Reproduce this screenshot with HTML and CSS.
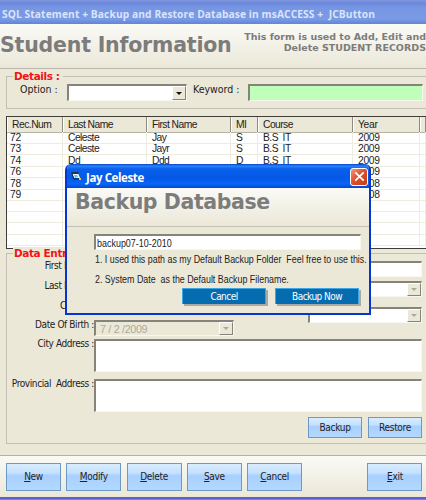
FILE: index.html
```html
<!DOCTYPE html>
<html lang="en">
<head>
<meta charset="utf-8">
<title>Student Information</title>
<link rel="stylesheet" href="styles.css">
</head>
<body>
<div class="window">
  <div class="titlebar"><span class="narrow">SQL Statement + Backup and Restore Database in msACCESS +&nbsp; JCButton</span></div>
  <header class="banner">
    <h1>Student Information</h1>
    <p>This form is used to Add, Edit and<br>Delete STUDENT RECORDS</p>
  </header>
  <main>
    <section class="group details">
      <h2>Details :</h2>
      <div class="search">
        <label class="option">Option :</label>
        <div class="field combo"><span class="drop"></span></div>
        <label class="keyword">Keyword :</label>
        <div class="field green"></div>
      </div>
    </section>
    <section class="list">
      <div class="row head"><span>Rec.Num</span><span>Last Name</span><span>First Name</span><span>MI</span><span>Course</span><span>Year</span><span></span></div>
      <div class="row"><span>72</span><span>Celeste</span><span>Jay</span><span>S</span><span>B.S&nbsp; IT</span><span>2009</span><span></span></div>
      <div class="row"><span>73</span><span>Celeste</span><span>Jayr</span><span>S</span><span>B.S&nbsp; IT</span><span>2009</span><span></span></div>
      <div class="row"><span>74</span><span>Dd</span><span>Ddd</span><span>D</span><span>B.S&nbsp; IT</span><span>2009</span><span></span></div>
      <div class="row"><span>76</span><span></span><span></span><span></span><span></span><span>2009</span><span></span></div>
      <div class="row"><span>78</span><span></span><span></span><span></span><span></span><span>2008</span><span></span></div>
      <div class="row"><span>79</span><span></span><span></span><span></span><span></span><span>2008</span><span></span></div>
      <div class="row"><span></span><span></span><span></span><span></span><span></span><span></span><span></span></div>
      <div class="row"><span></span><span></span><span></span><span></span><span></span><span></span><span></span></div>
      <div class="row"><span></span><span></span><span></span><span></span><span></span><span></span><span></span></div>
      <div class="row"><span></span><span></span><span></span><span></span><span></span><span></span><span></span></div>
    </section>
    <section class="group entry">
      <h2>Data Entry :</h2>
      <div class="form">
        <label>First Name :</label><div class="field wide"></div>
        <label>Last Name :</label><div class="field wide combo off"><span class="drop"></span></div>
        <label class="course">Course :</label><div class="field half combo off"><span class="drop"></span></div>
        <label>Date Of Birth :</label><div class="field date combo off"><span class="value">7 / 2 /2009</span><span class="drop"></span></div>
        <label>City Address :</label><div class="field area"></div>
        <label>Provincial&nbsp; Address :</label><div class="field area"></div>
      </div>
      <div class="actions"><button class="small">Backup</button><button class="small">Restore</button></div>
    </section>
  </main>
  <footer>
    <button><u>N</u>ew</button><button><u>M</u>odify</button><button><u>D</u>elete</button><button><u>S</u>ave</button><button><u>C</u>ancel</button><button class="exit"><u>E</u>xit</button>
  </footer>
  <div class="edge"></div>

  <div class="dialog">
    <div class="caption">
      <svg width="11" height="9" viewBox="0 0 11 9"><path d="M1 1h6l2 5H3z" fill="#f4f6f4"/><path d="M0 0h7l1 2H1z" fill="#143a50"/><path d="M1 2l2 5h5" fill="none" stroke="#123" stroke-width="1"/><path d="M3 3l3 0 1 2-3 1z" fill="#5ccbd0"/><path d="M8 6h2v2H8z" fill="#e8c84a"/></svg>
      <span>Jay Celeste</span>
      <div class="close"><svg width="11" height="11" viewBox="0 0 11 11"><path d="M1.3 1.3l8.4 8.4M9.7 1.3l-8.4 8.4" stroke="#fff" stroke-width="1.7"/></svg></div>
    </div>
    <div class="heading">Backup Database</div>
    <div class="content">
      <div class="field path"><span class="narrow">backup07-10-2010</span></div>
      <p class="note1"><span class="narrow">1. I used this path as my Default Backup Folder&nbsp; Feel free to use this.</span></p>
      <p class="note2"><span class="narrow">2. System Date&nbsp; as the Default Backup Filename.</span></p>
      <div class="choices"><button class="flat">Cancel</button><button class="flat">Backup Now</button></div>
    </div>
  </div>
</div>
</body>
</html>
```
FILE: styles.css
```css
* { box-sizing: border-box; }
body { margin: 0; overflow: hidden; }
.window {
  position: relative;
  width: 426px;
  height: 500px;
  overflow: hidden;
  display: flex;
  flex-direction: column;
  background: #ebe8d8;
  color: #222;
  font: 10.5px/12px "DejaVu Sans Condensed", "DejaVu Sans", sans-serif;
  white-space: nowrap;
}
h1, h2, p { margin: 0; }
.narrow { display: inline-block; transform: scaleX(.845); transform-origin: 0 50%; }
.titlebar {
  height: 24px;
  flex: none;
  padding: 1px 0 0 2px;
  background: linear-gradient(#8197dc 0, #6a88dc 3px, #7695e2 7px, #7a9be6 19px, #6484d4 24px);
  color: #dbe4fa;
  font: bold 11px/26px "Open Sans", sans-serif;
  letter-spacing: .1px;
}
.titlebar .narrow { transform: scaleX(.93); }
.banner {
  height: 45px;
  flex: none;
  display: flex;
  justify-content: space-between;
  background: linear-gradient(#fafaf6, #ebe8d8);
  border-bottom: 1px solid #bab8ae;
  color: #7c7c7c;
}
.banner h1 {
  font: bold 20.5px/42px "DejaVu Sans", sans-serif;
  letter-spacing: -.2px;
  width: 232px;
}
.banner p {
  padding-top: 7px;
  text-align: right;
  font: bold 9.5px/11px "DejaVu Sans", sans-serif;
}
main { height: 386px; flex: none; }
.group { margin-left: 6px; border: 1px solid #c2c0b4; border-right: 0; }
h2 {
  width: max-content;
  margin: -7px 0 0 6px;
  padding: 0 3px 0 1px;
  background: #ebe8d8;
  color: #f01418;
  font: bold 10.5px/13px "DejaVu Sans", sans-serif;
  letter-spacing: -.4px;
}
.details { margin-top: 7px; height: 33px; }
.search { display: flex; margin-top: 1px; }
.option { width: 47px; margin: -1px 0 0 13px; }
.keyword { margin: -1px 0 0 6px; width: 55px; }
.field {
  background: #fff;
  border: solid;
  border-width: 2px 1px 1px 2px;
  border-color: #85847a #f8f7f0 #f8f7f0 #85847a;
}
.search .field { height: 17px; width: 120px; }
.search .green { width: 175px; background: #bfffb9; }
.combo { display: flex; justify-content: flex-end; }
.drop {
  width: 14px;
  background: #ebe8d8;
  border: 1px solid;
  border-color: #fff #85847a #85847a #fff;
  display: grid;
  place-items: center;
}
.drop::before { content: ""; border: 3px solid transparent; border-top-color: #111; border-bottom: 0; }
.off .drop::before { border-top-color: #aaa99c; }
.list {
  margin: 7px 0 0 6px;
  height: 133px;
  overflow: hidden;
  background: #fff;
  border: solid #3c3c38;
  border-width: 1px 0 1px 1px;
  font: 10.3px/11px "Liberation Sans", sans-serif;
  letter-spacing: -.55px;
}
.row {
  display: grid;
  grid-template-columns: 56px 84px 84px 27px 95px 67px 1fr;
  height: 11.4px;
}
.row span { border-right: 1px solid #eeebdf; border-bottom: 1px solid #eeebdf; padding-left: 5px; }
.row span:first-child { padding-left: 3px; letter-spacing: -.3px; }
.row span:nth-child(6) { letter-spacing: -.3px; }
.head { height: 15px; background: #ebe8d8; line-height: 15px; }
.head span, .head span:first-child { padding-left: 5px; border-color: #8d8b80; border-bottom-color: #b5b3a5; box-shadow: inset 1px 0 #fff; }
.row.head span:first-child { letter-spacing: -.5px; }
.entry { margin-top: 4px; height: 191px; }
.form {
  display: grid;
  grid-template-columns: 87px 328px;
  grid-template-rows: 20px 26px 13px 19px 40px 38px;
  margin-top: 1px;
  height: 156px;
}
.form label { text-align: right; margin-top: -1px; font-size: 10px; letter-spacing: -.4px; }
.form .course { margin-top: -7px; }
.form .field { height: 16px; justify-self: end; }
.form .wide { width: 328px; }
.form .half { width: 114px; }
.form .date { width: 140px; justify-self: start; background: #ebe8d8; }
.form .area { width: 328px; height: 33px; }
.value { flex: 1; padding-left: 4px; color: #aaa99c; font: 10.7px/15px "Liberation Sans", sans-serif; letter-spacing: -.3px; }
.actions { display: flex; gap: 6px; margin-left: 301px; }
button {
  width: 55px;
  height: 28px;
  padding: 0;
  flex: none;
  border: 1px solid #6d9ac4;
  background: linear-gradient(#d9edff, #c4e1ff 35%, #a8d0ff 45%, #b4d8ff);
  color: #222;
  font: 10px/12px "DejaVu Sans Condensed", sans-serif;
  letter-spacing: -.3px;
}
button.small { height: 21px; width: 54px; }
footer {
  height: 42px;
  flex: none;
  display: flex;
  gap: 5.3px;
  padding: 7px 0 0 6px;
  border-top: 1px solid #b4b2a8;
  background: linear-gradient(#fafaf6, #ebe8d8);
}
.exit { margin-left: 60px; }
.edge { height: 3px; background: linear-gradient(#5c60d8 0 2px, #7c82d4 2px); }
.dialog {
  position: absolute;
  left: 65px;
  top: 164px;
  width: 306px;
  height: 151px;
  border: solid #0735d0;
  border-width: 0 2px 2px;
  border-radius: 6px 6px 0 0;
  background: #ebe8d8;
  overflow: hidden;
}
.caption {
  display: flex;
  align-items: center;
  height: 24px;
  padding: 1px 1px 0 4px;
  background: linear-gradient(#0842c6, #2a82fa 2px, #0860ec 5px, #0558e6 14px, #0866f8 20px, #0745cc);
  color: #fff;
  font: bold 11.5px/24px "Open Sans", sans-serif;
  letter-spacing: -.4px;
}
.caption span { margin: 2px 0 0 4px; flex: 1; }
.close {
  width: 18px;
  height: 18px;
  display: grid;
  place-items: center;
  border: 1px solid #fff;
  border-radius: 3px;
  background: linear-gradient(135deg, #f09a80, #e04f2c 45%, #c53d14);
}
.heading {
  height: 39px;
  padding-left: 8px;
  background: linear-gradient(#fafaf6, #ebe8d8);
  border-bottom: 1px solid #c2c0b4;
  color: #7c7c7c;
  font: bold 20.5px/29px "DejaVu Sans", sans-serif;
  letter-spacing: -.4px;
}
.content { padding: 7px 0 0 27px; font: 10.5px/12px "Liberation Sans", sans-serif; }
.path { width: 267px; height: 16px; font-size: 10.6px; line-height: 14px; padding-left: 1px; }
.note1 { margin-top: 3px; padding-left: 1px; }
.note2 { margin-top: 8px; padding-left: 1px; }
.choices { display: flex; gap: 9px; margin: 3px 0 0 88px; }
button.flat {
  width: 84px;
  height: 16px;
  border: solid #42a5e0;
  border-width: 1px 1px 0;
  background: #056daf;
  color: #fff;
  box-shadow: 2px 2px #aaa9a4;
  letter-spacing: -.55px;
}
```
